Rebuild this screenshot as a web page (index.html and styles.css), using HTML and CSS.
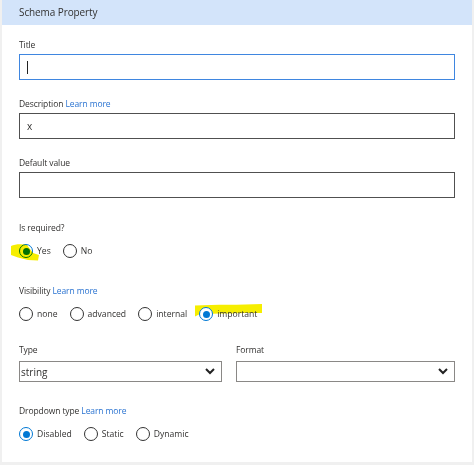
FILE: index.html
```html
<!DOCTYPE html>
<html>
<head>
<meta charset="utf-8">
<link rel="stylesheet" href="styles.css">
</head>
<body>
<div class="panel">
  <div class="header">Schema Property</div>
  <div class="body">
    <div class="field">
      <div class="label">Title</div>
      <div class="input focused"><span class="caret"></span></div>
    </div>
    <div class="field">
      <div class="label">Description <a class="link">Learn more</a></div>
      <div class="input"><span class="value">x</span></div>
    </div>
    <div class="field">
      <div class="label">Default value</div>
      <div class="input last"></div>
    </div>
    <div class="field radios-field">
      <div class="label">Is required?</div>
      <div class="radios">
        <svg class="mark mark-yes" width="30" height="17" viewBox="0 0 30 17"><path d="M1 2 C5 0 12 0 17 1 L23 9 L29 11 L28 16.5 L18 16 L8 13.5 L1 11 Z" fill="#f6ee00"/></svg>
        <div class="opt"><span class="radio checked"></span><span>Yes</span></div>
        <div class="opt"><span class="radio"></span><span>No</span></div>
      </div>
    </div>
    <div class="field radios-field">
      <div class="label">Visibility <a class="link">Learn more</a></div>
      <div class="radios tight">
        <svg class="mark mark-imp" width="68" height="13" viewBox="0 0 68 13"><path d="M0 1.5 C20 0.5 45 1 67 0 L67 9 C45 9 20 9.5 4 10.5 L0 12.5 Z" fill="#f6ee00"/></svg>
        <div class="opt"><span class="radio"></span><span>none</span></div>
        <div class="opt"><span class="radio"></span><span>advanced</span></div>
        <div class="opt"><span class="radio"></span><span>internal</span></div>
        <div class="opt"><span class="radio checked"></span><span>important</span></div>
      </div>
    </div>
    <div class="row">
      <div class="field col">
        <div class="label">Type</div>
        <div class="select"><span class="value">string</span><svg class="chev" width="10" height="7" viewBox="0 0 10 7"><path d="M1 1 L5 5 L9 1" fill="none" stroke="#222" stroke-width="2"/></svg></div>
      </div>
      <div class="field col">
        <div class="label">Format</div>
        <div class="select"><span class="value"></span><svg class="chev" width="10" height="7" viewBox="0 0 10 7"><path d="M1 1 L5 5 L9 1" fill="none" stroke="#222" stroke-width="2"/></svg></div>
      </div>
    </div>
    <div class="field radios-field">
      <div class="label">Dropdown type <a class="link">Learn more</a></div>
      <div class="radios">
        <div class="opt"><span class="radio checked"></span><span>Disabled</span></div>
        <div class="opt"><span class="radio"></span><span>Static</span></div>
        <div class="opt"><span class="radio"></span><span>Dynamic</span></div>
      </div>
    </div>
  </div>
</div>
</body>
</html>
```
FILE: styles.css
```css
html, body {
  margin: 0;
  padding: 0;
  background: #f0f0f0;
}
body {
  font-family: "Open Sans", "Noto Sans", sans-serif;
  color: #323130;
  width: 474px;
  height: 465px;
  overflow: hidden;
}
.panel {
  margin-left: 2px;
  width: 470px;
  height: 462px;
  background: #fff;
  box-sizing: border-box;
}
.header {
  height: 25px;
  background: #d3e4fa;
  font-size: 10px;
  letter-spacing: -0.1px;
  line-height: 25px;
  padding-left: 17px;
  color: #323130;
}
.body {
  padding: 13px 17px 0 17px;
  display: flex;
  flex-direction: column;
}
.field {
  display: flex;
  flex-direction: column;
}
.label {
  font-size: 8.5px;
  letter-spacing: -0.1px;
  line-height: 14px;
  height: 14px;
  margin-bottom: 2px;
}
.link {
  color: #2a73d1;
}
.input {
  height: 26px;
  box-sizing: border-box;
  width: 436px;
  border: 1px solid #505050;
  display: flex;
  align-items: center;
  padding-left: 7px;
  margin-bottom: 17px;
}
.input.last {
  margin-bottom: 23px;
}
.input.focused {
  border: 1.5px solid #3f86e0;
}
.caret {
  width: 1px;
  height: 13px;
  background: #222;
}
.value {
  font-size: 10px;
  color: #323130;
}
.radios-field .label {
  margin-bottom: 9px;
}
.radios {
  position: relative;
  display: flex;
  align-items: center;
  gap: 12px;
  height: 14px;
  margin-bottom: 26px;
  font-size: 8.6px;
}
.radios.tight {
  margin-bottom: 22px;
}
.opt {
  position: relative;
  display: flex;
  align-items: center;
  gap: 4px;
}
.radio {
  width: 14px;
  height: 14px;
  box-sizing: border-box;
  border: 1px solid #333;
  border-radius: 50%;
  position: relative;
  background: #fff;
}
.radio.checked {
  border-color: #0078d4;
}
.radio.checked::after {
  content: "";
  position: absolute;
  left: 2.5px;
  top: 2.5px;
  width: 7px;
  height: 7px;
  border-radius: 50%;
  background: #0078d4;
}
.mark {
  position: absolute;
  mix-blend-mode: multiply;
}
.mark-yes {
  left: -9px;
  top: 0px;
  z-index: 2;
}
.mark-imp {
  left: 176px;
  top: -3px;
}
.row {
  display: flex;
  gap: 14px;
}
.col .label {
  margin-bottom: 4px;
}
.col:first-child .select {
  width: 203px;
}
.col:last-child .select {
  width: 219px;
}
.select {
  height: 21px;
  box-sizing: border-box;
  border: 1px solid #8a8886;
  display: flex;
  align-items: center;
  justify-content: space-between;
  padding: 0 6px 0 1px;
  margin-bottom: 22px;
}
.chev {
  display: block;
}
```
